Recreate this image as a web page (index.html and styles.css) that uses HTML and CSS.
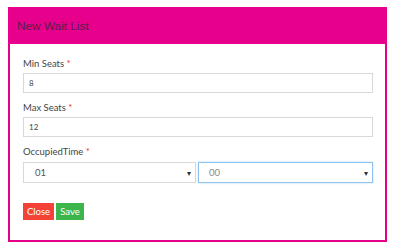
FILE: index.html
```html
<!DOCTYPE html>
<html lang="en">
<head>
    <meta charset="UTF-8">
    <meta name="viewport" content="width=device-width, initial-scale=1.0">
    <title>New Wait List</title>
    <link rel="stylesheet" href="styles.css">
</head>
<body>
    <div class="modal">
        <div class="modal-header">
            <h4>New Wait List</h4>
        </div>
        <div class="modal-body">
            <div class="field">
                <label>Min Seats <span class="req">*</span></label>
                <input type="text" class="input" value="8">
            </div>
            <div class="field">
                <label>Max Seats <span class="req">*</span></label>
                <input type="text" class="input" value="12">
            </div>
            <div class="field">
                <label>OccupiedTime <span class="req">*</span></label>
                <div class="time-row">
                    <div class="select">01<span class="caret">&#9662;</span></div>
                    <div class="select focus">00<span class="caret">&#9662;</span></div>
                </div>
            </div>
            <div class="actions">
                <button class="btn btn-close">Close</button>
                <button class="btn btn-save">Save</button>
            </div>
        </div>
    </div>
</body>
</html>
```

FILE: styles.css
```css
* {
    margin: 0;
    padding: 0;
    box-sizing: border-box;
}

body {
    background-color: #fff;
    font-family: 'Lato', sans-serif;
    padding: 7px 19px 0 8px;
}

.modal {
    width: 379px;
    height: 235px;
    border: 2px solid #e5008b;
    border-top: none;
    background-color: #fff;
}

.modal-header {
    background-color: #e6008c;
    height: 37px;
    margin: 0 -2px;
    padding: 1px 9px 0;
    display: flex;
    align-items: center;
}

.modal-header h4 {
    font-family: 'Liberation Sans', Arial, sans-serif;
    font-weight: normal;
    font-size: 11.8px;
    color: #5a1f4a;
}

.modal-body {
    padding: 14px 12px 0 13px;
}

.field {
    margin-bottom: 9px;
}

.field label {
    display: block;
    font-size: 9.5px;
    color: #444;
    height: 15px;
}

.req {
    color: #e8322f;
}

.input {
    display: block;
    width: 350px;
    height: 20px;
    border: 1px solid #d9d9d9;
    padding: 0 5px;
    font-family: 'Lato', sans-serif;
    font-size: 8px;
    color: #444;
    outline: none;
}

.time-row {
    display: flex;
    gap: 2px;
    margin-top: 1px;
}

.select {
    position: relative;
    height: 21px;
    width: 173px;
    border: 1px solid #d9d9d9;
    display: flex;
    align-items: center;
    padding-left: 11px;
    font-size: 9.5px;
    color: #555;
}

.select.focus {
    width: 175px;
    border-color: #8fc3ee;
    box-shadow: 0 0 2px #b9dbf6;
    padding-left: 10px;
    color: #888;
}

.caret {
    position: absolute;
    right: 4px;
    top: 5px;
    font-size: 8px;
    color: #333;
}

.actions {
    display: flex;
    gap: 2px;
    margin-top: 20px;
}

.btn {
    border: none;
    height: 17px;
    font-family: 'Lato', sans-serif;
    font-size: 9.5px;
    color: #fff;
    padding: 0 4px;
}

.btn-close {
    width: 31px;
    background-color: #f44336;
}

.btn-save {
    width: 28px;
    background-color: #3cb54a;
}
```
